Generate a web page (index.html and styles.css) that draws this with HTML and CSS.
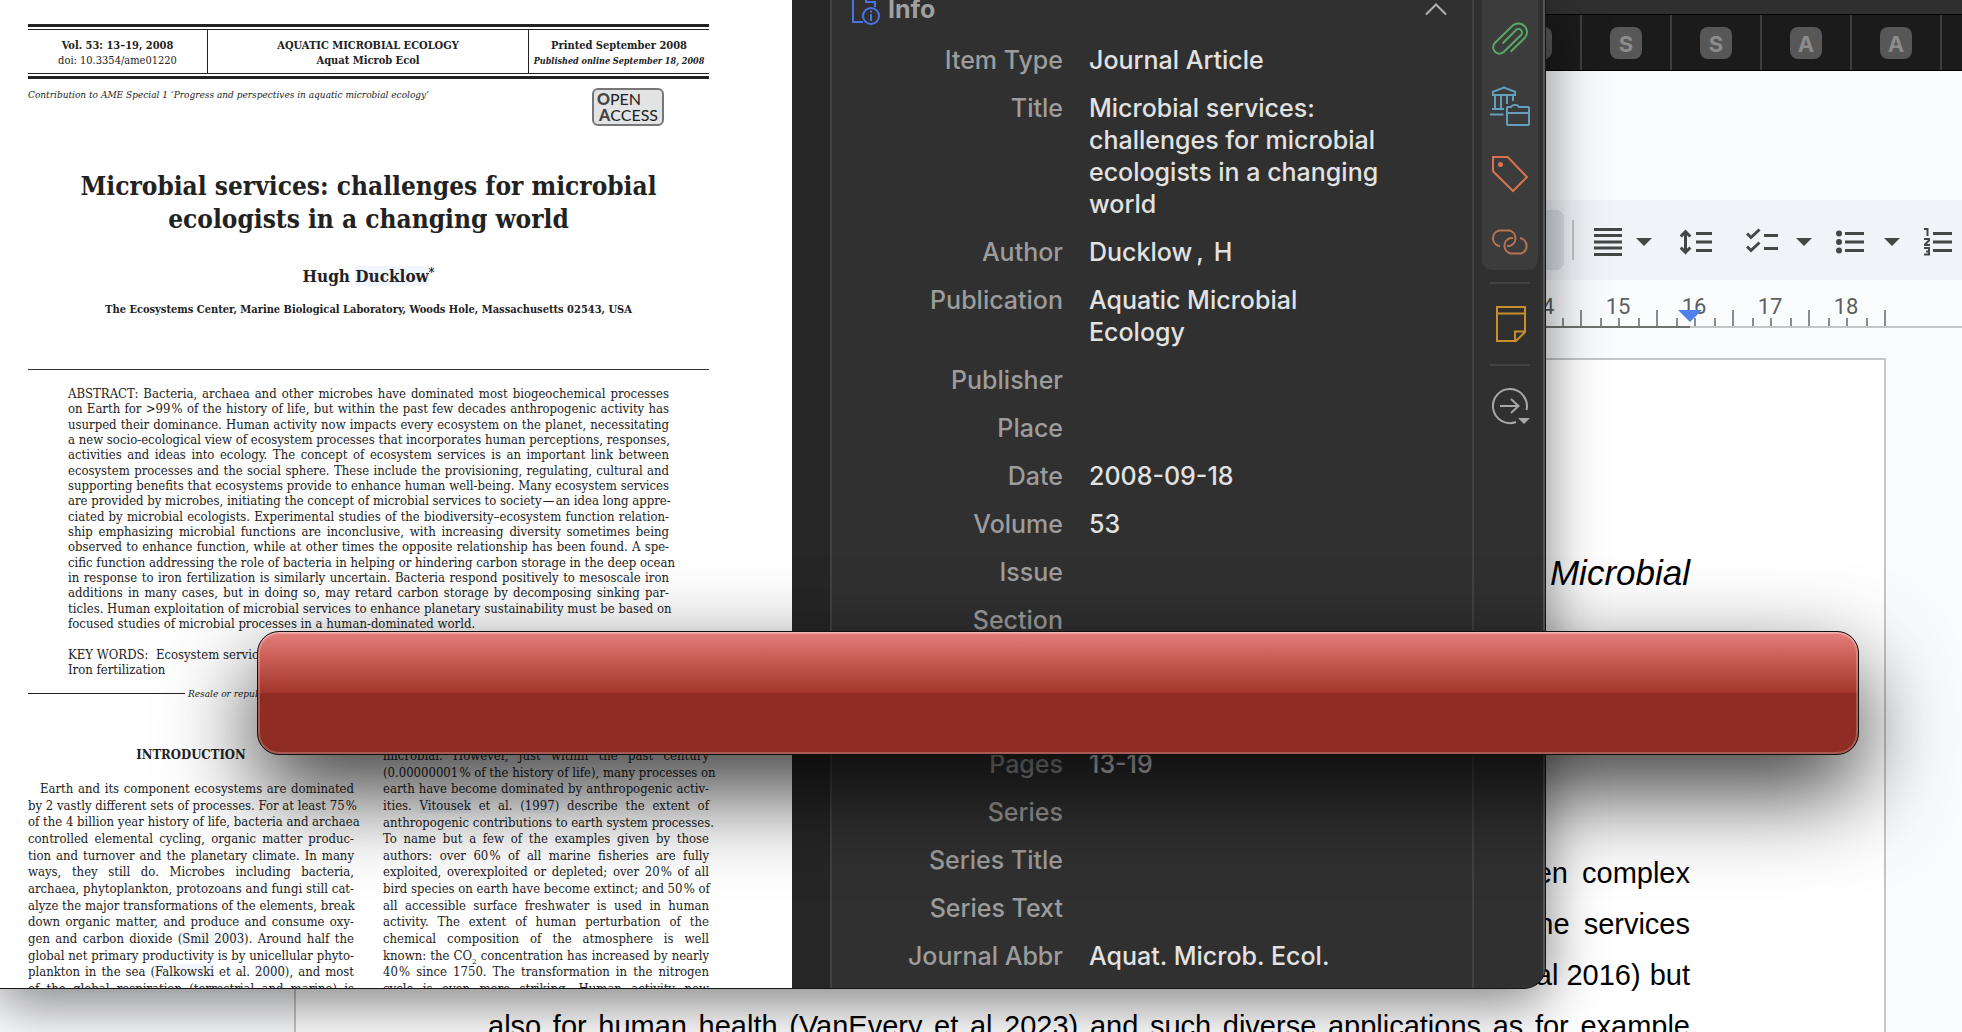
FILE: index.html
```html
<!DOCTYPE html>
<html lang="en">
<head>
<meta charset="utf-8">
<title>Microbial services: challenges for microbial ecologists in a changing world</title>
<link rel="stylesheet" href="styles.css">
</head>
<body>
<div class="desktop">

  <div class="docs">
    <div class="titlebar"></div>
    <nav class="tabs">
      <a class="tab" href="#"><span class="favicon"></span></a>
      <a class="tab" href="#"><span class="favicon">S</span></a>
      <a class="tab" href="#"><span class="favicon">S</span></a>
      <a class="tab" href="#"><span class="favicon">A</span></a>
      <a class="tab" href="#"><span class="favicon">A</span></a>
      <span class="tab-end"></span>
    </nav>
    <div class="toolbar">
      <button class="tool active" aria-label="Style"></button>
      <span class="divider"></span>
      <button class="tool justify" aria-label="Justify"><svg width="28" height="28"><path d="M0 1.5h28M0 7.5h28M0 14h28M0 20h28M0 26.5h28"/></svg></button>
      <button class="tool drop-justify" aria-label="Alignment options"><svg width="16" height="8"><path class="solid" d="M0 0h16l-8 8z"/></svg></button>
      <button class="tool spacing" aria-label="Line spacing"><svg width="32" height="28"><path d="M16 5.500h16M16 14h16M16 22.500h16"/><path d="M5.500 4v20M0.700 8.500l4.800-4.800 4.800 4.800M0.700 19.500l4.800 4.800 4.800-4.800"/></svg></button>
      <button class="tool check" aria-label="Checklist"><svg width="32" height="28"><path d="M18 7.500h14M18 20.500h14"/><path d="M1 5.500l4 4L13.500 1.500M1 18.500l4 4L13.500 14.500"/></svg></button>
      <button class="tool drop-check" aria-label="Checklist options"><svg width="16" height="8"><path class="solid" d="M0 0h16l-8 8z"/></svg></button>
      <button class="tool bullets" aria-label="Bulleted list"><svg width="28" height="28"><path d="M9 5.500h19M9 14h19M9 22.500h19"/><circle cx="3" cy="5.500" r="3"/><circle cx="3" cy="14" r="3"/><circle cx="3" cy="22.500" r="3"/></svg></button>
      <button class="tool drop-bullets" aria-label="Bullet options"><svg width="16" height="8"><path class="solid" d="M0 0h16l-8 8z"/></svg></button>
      <button class="tool numbers" aria-label="Numbered list"><svg width="28" height="28"><path d="M9 5.500h19M9 14h19M9 22.500h19"/><path class="digits" d="M0 1h3.500v7M0 11h5v1.500L1 16.500v.5h5M0 20h5v6.500H0M2 23.500h3"/></svg></button>
    </div>
    <div class="ruler">
      <div class="cell"><span>14</span><svg width="76" height="16"><path d="M1 0v16M21 8v8M39 8v8M59 8v8"/></svg></div>
      <div class="cell"><span>15</span><svg width="76" height="16"><path d="M1 0v16M21 8v8M39 8v8M59 8v8"/></svg></div>
      <div class="cell"><span>16</span><svg width="76" height="16"><path d="M1 0v16M21 8v8M39 8v8M59 8v8"/></svg></div>
      <div class="cell"><span>17</span><svg width="76" height="16"><path d="M1 0v16M21 8v8M39 8v8M59 8v8"/></svg></div>
      <div class="cell"><span>18</span><svg width="76" height="16"><path d="M1 0v16M21 8v8M39 8v8M59 8v8"/></svg></div>
      <svg class="last-tick" width="2" height="16"><path d="M1 0v16"/></svg>
      <svg class="marker" width="24" height="12"><path d="M0 0h24L12 12z"/></svg>
    </div>
    <div class="baseline"><span></span></div>
    <div class="sheet">
      <p class="sheet-title">Microbial</p>
      <p class="tail"><span>between</span><span>complex</span></p>
      <p class="tail"><span>the</span><span>services</span></p>
      <p class="tail tight"><span>al 2016)</span><span>but</span></p>
      <p class="full">also for human health (VanEvery et al 2023) and such diverse applications as for example</p>
    </div>
  </div>

  <div class="window">
    <article class="paper">
      <header class="masthead">
        <div class="mast-row">
          <div class="mast-left"><b>Vol. 53: 13–19, 2008</b><br>doi: 10.3354/ame01220</div>
          <div class="mast-mid"><b>AQUATIC MICROBIAL ECOLOGY<br>Aquat Microb Ecol</b></div>
          <div class="mast-right"><b>Printed September 2008</b><br><b class="online">Published online September 18, 2008</b></div>
        </div>
      </header>
      <div class="subhead">
        <i>Contribution to AME Special 1 ‘Progress and perspectives in aquatic microbial ecology’</i>
        <div class="open-access"><span><b>O</b>PEN</span><span><b>A</b>CCESS</span></div>
      </div>
      <h1>Microbial services: challenges for microbial<br>ecologists in a changing world</h1>
      <p class="author">Hugh <a href="#">Ducklow</a><sup>*</sup></p>
      <p class="affil">The Ecosystems Center, Marine Biological Laboratory, Woods Hole, Massachusetts 02543, USA</p>
      <hr>
      <div class="abstract">
        <p>ABSTRACT: Bacteria, archaea and other microbes have dominated most biogeochemical processes</p>
        <p>on Earth for &gt;99&#8202;% of the history of life, but within the past few decades anthropogenic activity has</p>
        <p>usurped their dominance. Human activity now impacts every ecosystem on the planet, necessitating</p>
        <p>a new socio-ecological view of ecosystem processes that incorporates human perceptions, responses,</p>
        <p>activities and ideas into ecology. The concept of ecosystem services is an important link between</p>
        <p>ecosystem processes and the social sphere. These include the provisioning, regulating, cultural and</p>
        <p>supporting benefits that ecosystems provide to enhance human well-being. Many ecosystem services</p>
        <p>are provided by microbes, initiating the concept of microbial services to society&#8202;—&#8202;an idea long appre-</p>
        <p>ciated by microbial ecologists. Experimental studies of the biodiversity–ecosystem function relation-</p>
        <p>ship emphasizing microbial functions are inconclusive, with increasing diversity sometimes being</p>
        <p>observed to enhance function, while at other times the opposite relationship has been found. A spe-</p>
        <p>cific function addressing the role of bacteria in helping or hindering carbon storage in the deep ocean</p>
        <p>in response to iron fertilization is similarly uncertain. Bacteria respond positively to mesoscale iron</p>
        <p>additions in many cases, but in doing so, may retard carbon storage by decomposing sinking par-</p>
        <p>ticles. Human exploitation of microbial services to enhance planetary sustainability must be based on</p>
        <p class="end">focused studies of microbial processes in a human-dominated world.</p>
      </div>
      <p class="keywords">KEY WORDS: &nbsp;Ecosystem services<br>Iron fertilization</p>
      <div class="resale"><span></span><i>Resale or republ</i></div>
      <div class="columns">
        <section>
          <h2>INTRODUCTION</h2>
          <div class="lines left">
            <p class="indent">Earth and its component ecosystems are dominated</p>
            <p>by 2 vastly different sets of processes. For at least 75&#8202;%</p>
            <p>of the 4 billion year history of life, bacteria and archaea</p>
            <p>controlled elemental cycling, organic matter produc-</p>
            <p>tion and turnover and the planetary climate. In many</p>
            <p>ways, they still do. Microbes including bacteria,</p>
            <p>archaea, phytoplankton, protozoans and fungi still cat-</p>
            <p>alyze the major transformations of the elements, break</p>
            <p>down organic matter, and produce and consume oxy-</p>
            <p>gen and carbon dioxide (<a href="#">Smil 2003</a>). Around half the</p>
            <p>global net primary productivity is by unicellular phyto-</p>
            <p>plankton in the sea (<a href="#">Falkowski</a> et al. <a href="#">2000</a>), and most</p>
            <p>of the global respiration (terrestrial and marine) is</p>
          </div>
        </section>
        <section>
          <div class="lines right">
            <p>microbial. However, just within the past century</p>
            <p>(0.00000001&#8202;% of the history of life), many processes on</p>
            <p>earth have become dominated by anthropogenic activ-</p>
            <p>ities. <a href="#">Vitousek</a> et al. (<a href="#">1997</a>) describe the extent of</p>
            <p>anthropogenic contributions to earth system processes.</p>
            <p>To name but a few of the examples given by those</p>
            <p>authors: over 60&#8202;% of all marine fisheries are fully</p>
            <p>exploited, overexploited or depleted; over 20&#8202;% of all</p>
            <p>bird species on earth have become extinct; and 50&#8202;% of</p>
            <p>all accessible surface freshwater is used in human</p>
            <p>activity. The extent of human perturbation of the</p>
            <p>chemical composition of the atmosphere is well</p>
            <p>known: the CO<sub>2</sub> concentration has increased by nearly</p>
            <p>40&#8202;% since 1750. The transformation in the nitrogen</p>
            <p>cycle is even more striking. Human activity now</p>
          </div>
        </section>
      </div>
    </article>

    <section class="info">
      <header>
        <svg width="32" height="26" fill="none" stroke="#4a74e0" stroke-width="2"><path d="M3 0v22h10M16 0v2h9v5"/><circle cx="21" cy="16" r="8"/><path d="M21 14v7M21 10.500v2"/></svg>
        <h2>Info</h2>
        <button aria-label="Collapse"><svg width="24" height="14" fill="none" stroke="#b0b0b0" stroke-width="2"><path d="M2 12.500L12 2.500l10 10"/></svg></button>
      </header>
      <dl>
        <dt>Item Type</dt><dd>Journal Article</dd>
        <dt>Title</dt><dd>Microbial services:<br>challenges for microbial<br>ecologists in a changing<br>world</dd>
        <dt>Author</dt><dd class="name"><span>Ducklow</span><span>,</span><span>H</span></dd>
        <dt>Publication</dt><dd>Aquatic Microbial<br>Ecology</dd>
        <dt>Publisher</dt><dd></dd>
        <dt>Place</dt><dd></dd>
        <dt>Date</dt><dd>2008-09-18</dd>
        <dt>Volume</dt><dd>53</dd>
        <dt>Issue</dt><dd></dd>
        <dt>Section</dt><dd></dd>
        <dt></dt><dd></dd>
        <dt></dt><dd></dd>
        <dt>Pages</dt><dd>13-19</dd>
        <dt>Series</dt><dd></dd>
        <dt>Series Title</dt><dd></dd>
        <dt>Series Text</dt><dd></dd>
        <dt>Journal Abbr</dt><dd>Aquat. Microb. Ecol.</dd>
      </dl>
    </section>

    <nav class="sidenav">
      <div class="group">
        <button aria-label="Attachments"><svg class="green" width="40" height="40"><path d="M20.700 33.700L35 19.500A8.600 8.600 0 0 0 23 7.300L5 24.800A6.300 6.300 0 0 0 14 33.800L31 17A3.500 3.500 0 0 0 26 12L12.500 25.500"/></svg></button>
        <button aria-label="Libraries and collections"><svg class="blue" width="40" height="40"><path d="M3 9V5.800L14 1.500l11 4.300V9zM5 9v14M11 9v14M17 9v9M23 9v6M2 23h12M0 28.500h13.500M17 38V22q0-1 1-1h3q1-2 3-2h2q2 0 3 2h9q1 0 1 1v16q0 1-1 1H18q-1 0-1-1zM17 27h22"/></svg></button>
        <button aria-label="Tags"><svg class="orange" width="40" height="40"><path d="M3 3h14.700L37 23 23 37 3 17.300z"/><circle cx="10.500" cy="10.500" r="2.500"/></svg></button>
        <button aria-label="Related"><svg class="brown" width="40" height="40"><path d="M10 24H9A8 8 0 0 1 9 8.500H19.500A8 8 0 0 1 19.500 24H17M30 16A8 8 0 0 1 31 31.500H20.500A8 8 0 0 1 20.500 16H23"/></svg></button>
      </div>
      <span class="rule"></span>
      <button aria-label="Notes"><svg class="yellow" width="40" height="40"><path d="M7 3h28v25l-9 9H7zM7 9.500h28M25 37v-9.500h10"/></svg></button>
      <span class="rule"></span>
      <button aria-label="Locate"><svg class="grey" width="40" height="40"><path d="M26 36A17 17 0 1 1 36.500 24M10 20h18.500M21 13l7.500 7-7.500 7"/><path class="tip" d="M28 32h12l-6 6z"/></svg></button>
    </nav>
  </div>

  <div class="banner"></div>
</div>
</body>
</html>
```
FILE: styles.css
```css
* { box-sizing: border-box; }
body { margin: 0; overflow: hidden; }
p, h1, h2, dl, dd { margin: 0; }
button { border: 0; padding: 0; background: none; display: block; }
svg { display: block; }
a { color: inherit; text-decoration: none; }

.desktop { position: relative; height: 100vh; overflow: hidden; background: #fafbfd; }

/* word processor behind */
.docs { font-family: "Liberation Sans", Arial, sans-serif; color: #000; }
.titlebar { height: 15px; background: #2f2f2f; border-bottom: 1px solid #000; }
.tabs { display: flex; justify-content: flex-end; height: 56px; background: #1b1b1b; border-bottom: 1px solid #000; }
.tab { width: 90px; border-left: 2px solid #3f3f3f; display: flex; align-items: center; justify-content: center; }
.tab-end { width: 22px; border-left: 2px solid #3f3f3f; }
.favicon { width: 32px; height: 32px; border-radius: 8px; background: #575757; color: #8c8c8c; font: bold 22px/34px "Inter", sans-serif; text-align: center; }

.toolbar { display: flex; align-items: center; justify-content: flex-end; height: 80px; margin-top: 129px; padding-right: 10px; background: #f0f3f8; }
.tool svg { margin-top: 4px; fill: none; stroke: #444746; stroke-width: 3; }
.tool .solid, .tool circle { fill: #444746; stroke: none; }
.tool .digits { stroke-width: 2; }
.toolbar .active { width: 60px; height: 60px; border-radius: 8px; background: #d9e0e4; }
.divider { width: 2px; height: 40px; margin-left: 8px; background: #c4c7c8; }
.justify { margin-left: 20px; }
.drop-justify { margin-left: 14px; }
.spacing { margin-left: 28px; }
.check { margin-left: 34px; }
.drop-check { margin-left: 18px; }
.bullets { margin-left: 24px; }
.drop-bullets { margin-left: 20px; }
.numbers { margin-left: 24px; }

.ruler { position: relative; display: flex; justify-content: flex-end; align-items: flex-end; height: 46px; padding-right: 76px; }
.cell { display: grid; width: 76px; height: 46px; }
.cell > * { grid-area: 1 / 1; }
.cell span { padding-top: 15px; text-align: center; font: 22px/24px Roboto, sans-serif; color: #5c5f5e; }
.cell svg { align-self: end; }
.ruler svg { stroke: #8a8c8b; stroke-width: 2; }
.ruler .marker { position: absolute; right: 260px; bottom: 4px; fill: #4f80ec; stroke: none; }
.baseline { display: flex; height: 2px; padding-right: 272px; background: #c4c5c6; }
.baseline span { flex: 1; background: #70726f; }

.sheet { margin: 30px 76px 0 294px; padding: 187px 194px 0 192px; border: 2px solid #c4c6c8; background: #fff; font-size: 29px; line-height: 51px; white-space: nowrap; }
.sheet-title { font-size: 35px; font-style: italic; text-align: right; margin-bottom: 250px; }
.tail { display: flex; justify-content: flex-end; gap: 14px; }
.tight { gap: 9px; }
.full { text-align: justify; text-align-last: justify; }

/* reference manager window */
.window { position: absolute; inset: 0 416px 43px 0; display: flex; overflow: hidden; background: #262626; border: solid #161616; border-width: 0 1px 1px 0; border-radius: 0 0 22px 0; box-shadow: 0 14px 56px rgba(0, 0, 0, .5); }

.paper { flex: 1; min-width: 0; padding: 24px 83px 0 28px; background: #fff; color: #222; font: 13px/15px "DejaVu Serif Condensed", "DejaVu Serif", serif; white-space: nowrap; overflow: hidden; }
.masthead { border: solid #222; border-width: 3px 0; padding: 2px 0; }
.mast-row { display: grid; grid-template-columns: 179px 1fr 180px; height: 45px; border: solid #222; border-width: 1px 0; text-align: center; font-size: 11px; }
.mast-row > div { padding-top: 8px; }
.mast-mid { border: solid #222; border-width: 0 1px; }
.online { font-size: 9px; font-style: italic; }
.subhead { display: flex; justify-content: space-between; height: 89px; padding: 9px 45px 0 0; font-size: 10px; line-height: 13px; }
.open-access { display: flex; flex-direction: column; width: 72px; height: 38px; padding: 1px 3px; border: 2px solid #777; border-radius: 6px; background: #e2e3e5; font: 16px/16px Lato, sans-serif; }
.open-access b { color: #444; font-weight: 900; }
.open-access span:last-child { padding-left: 2px; }
.paper h1 { font-size: 26px; line-height: 33px; text-align: center; padding-top: 2px; }
.author { margin-top: 30px; font-size: 17px; line-height: 20px; font-weight: bold; text-align: center; }
.author sup { font-size: 12px; line-height: 0; vertical-align: 5px; }
.paper a { background: rgba(80, 130, 240, .08); }
.affil { margin-top: 16px; font-size: 11px; font-weight: bold; text-align: center; }
.paper hr { margin: 52px 0 16px; border: 0; border-top: 1px solid #333; }
.abstract, .lines { display: flex; flex-direction: column; justify-content: space-between; text-align-last: justify; }
.abstract { min-height: 245px; margin: 0 40px; }
.abstract .end { text-align-last: left; }
.keywords { margin: 16px 40px 0; }
.resale { display: flex; align-items: center; gap: 3px; margin-top: 9px; font-size: 10px; }
.resale span { width: 157px; border-top: 1px solid #222; }
.columns { display: grid; grid-template-columns: minmax(0, 1fr) minmax(0, 1fr); gap: 29px; margin-top: 45px; }
.columns h2 { font-size: 13px; line-height: 15px; text-align: center; margin: 1px 0 19px; }
.lines.left { min-height: 215px; }
.lines.right { min-height: 248px; margin-top: 2px; }
.indent { padding-left: 12px; }
.lines sub { font-size: 8px; line-height: 0; }

.info { width: 644px; margin-left: 38px; border: solid #414141; border-width: 0 2px; background: #303030; color: #e2e2e2; font: 500 25px/32px "Inter", sans-serif; }
.info header { display: flex; align-items: center; height: 18px; margin-bottom: 26px; padding: 0 24px 0 18px; }
.info header svg { align-self: flex-start; }
.info h2 { flex: 1; margin-left: 6px; font-size: 25px; line-height: 18px; color: #a0a0a0; }
.info dl { display: grid; grid-template-columns: 231px 1fr; gap: 16px 26px; }
.info dt { min-height: 32px; text-align: right; color: #9c9c9c; }
.name { display: flex; gap: 4px; }
.name span:last-child { margin-left: 6px; }

.sidenav { display: flex; flex-direction: column; align-items: center; gap: 20px; width: 71px; padding-left: 2px; border-right: 2px solid #555; background: #303030; }
.group { display: flex; flex-direction: column; gap: 28px; margin-bottom: -8px; padding: 18px 8px 8px; border-radius: 0 0 10px 10px; background: #3c3c3c; }
.rule { width: 40px; height: 2px; background: #424242; }
.sidenav svg { fill: none; stroke: currentColor; stroke-width: 2; }
.sidenav circle, .sidenav .tip { fill: currentColor; stroke: none; }
.green { color: #58a866; }
.blue { color: #64a0bb; }
.orange { color: #d9734d; }
.brown { color: #b87450; }
.yellow { color: #c98f2b; }
.grey { color: #a8a8a8; }

/* red overlay */
.banner { position: absolute; left: 257px; right: 103px; top: 631px; height: 124px; border: 1px solid #111; border-radius: 22px; background: linear-gradient(#e57f7b, #c85c54 45%, #a5372c 99%) top / 100% 61px no-repeat #8f2d24; box-shadow: inset 0 0 0 2px rgba(255, 255, 255, .22), inset 0 1px 1px rgba(255, 255, 255, .3), 0 36px 92px rgba(0, 0, 0, .78); }
```
